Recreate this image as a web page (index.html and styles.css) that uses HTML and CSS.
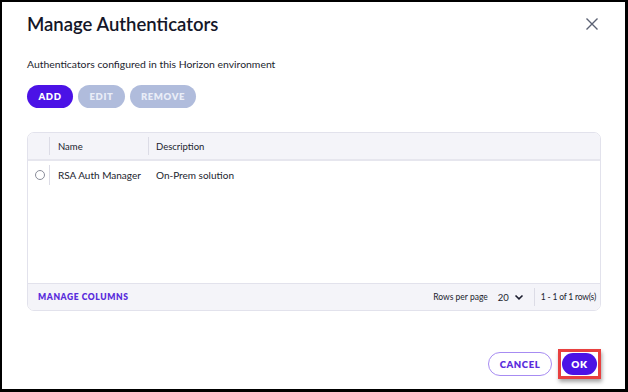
FILE: index.html
```html
<!DOCTYPE html>
<html>
<head>
<meta charset="utf-8">
<link rel="stylesheet" href="styles.css">
</head>
<body>
<div class="dialog">
  <div class="head">
    <h1 class="title">Manage Authenticators</h1>
    <svg class="close" width="14" height="14" viewBox="0 0 14 14"><path d="M1.5 1.5 L12.5 12.5 M12.5 1.5 L1.5 12.5" stroke="#5b6173" stroke-width="1.4" fill="none"/></svg>
  </div>
  <p class="sub">Authenticators configured in this Horizon environment</p>
  <div class="actions">
    <button class="btn primary">ADD</button>
    <button class="btn disabled">EDIT</button>
    <button class="btn disabled">REMOVE</button>
  </div>
  <div class="grid">
    <div class="row header">
      <div class="cell sel"><span class="sep"></span></div>
      <div class="cell name">Name<span class="sep"></span></div>
      <div class="cell desc">Description</div>
    </div>
    <div class="row">
      <div class="cell sel"><span class="radio"></span><span class="sep"></span></div>
      <div class="cell name">RSA Auth Manager</div>
      <div class="cell desc">On-Prem solution</div>
    </div>
    <div class="spacer"></div>
    <div class="footer">
      <span class="manage">MANAGE COLUMNS</span>
      <div class="pager">
        <span class="rpp">Rows per page</span>
        <span class="size">20</span>
        <svg class="chev" width="10" height="8" viewBox="0 0 10 8"><path d="M1.5 2.5 L5 5.8 L8.5 2.5" stroke="#1b1d2e" stroke-width="1.6" fill="none"/></svg>
        <span class="vsep"></span>
        <span class="count">1 - 1 of 1 row(s)</span>
      </div>
    </div>
  </div>
  <div class="bottom">
    <button class="btn cancel">CANCEL</button>
    <div class="highlight"><button class="btn primary ok">OK</button></div>
  </div>
</div>
</body>
</html>
```

FILE: styles.css
```css
html, body {
  margin: 0;
  padding: 0;
  background: #000;
}
body {
  width: 628px;
  height: 392px;
  overflow: hidden;
  font-family: "Lato", "Noto Sans", sans-serif;
  color: #1b1d2e;
}
.dialog {
  margin: 2px 3px 0 2px;
  height: 387px;
  background: #fff;
  box-sizing: border-box;
  padding: 0 24px 0 25px;
  display: flex;
  flex-direction: column;
}
.head {
  display: flex;
  justify-content: space-between;
  align-items: center;
  height: 44px;
}
.title {
  margin: 0;
  font-size: 18.5px;
  font-weight: 600;
  color: #141628;
  padding-top: 0;
}
.close {
  margin-right: 2px;
}
.sub {
  margin: 11px 0 0 0;
  font-size: 10.4px;
  line-height: 14px;
  color: #1b1d2e;
}
.actions {
  display: flex;
  gap: 5px;
  margin-top: 14px;
}
.btn {
  border: none;
  border-radius: 12px;
  height: 23px;
  padding: 0 12px;
  font-family: "Lato", sans-serif;
  font-weight: 800;
  font-size: 9.5px;
  letter-spacing: 0.6px;
  color: #fff;
}
.primary { background: #4b12e6; }
.disabled { background: #b0bcdc; color: #e9edf7; }
.actions .primary { width: 46px; padding: 0; }
.actions .disabled:nth-child(2) { width: 47px; padding: 0; }
.actions .disabled:nth-child(3) { width: 66px; padding: 0; }
.grid {
  margin-top: 24px;
  border: 1px solid #e2e2ec;
  border-radius: 7px;
  height: 179px;
  box-sizing: border-box;
  display: flex;
  flex-direction: column;
  overflow: hidden;
}
.row {
  display: flex;
  height: 28px;
  align-items: center;
  font-size: 10px;
  box-sizing: border-box;
}
.row.header {
  background: #f4f4f9;
  border-bottom: 2px solid #e6e6ee;
  height: 28px;
}
.cell {
  position: relative;
  height: 100%;
  display: flex;
  align-items: center;
  box-sizing: border-box;
}
.sel { width: 22px; justify-content: center; }
.name { width: 99px; padding-left: 8px; }
.desc { padding-left: 7px; }
.sep {
  position: absolute;
  right: 0;
  top: 4px;
  bottom: 4px;
  width: 1px;
  background: #dcdce6;
}
.header .cell { font-size: 9.5px; color: #1b1d2e; }
.radio {
  width: 8px;
  height: 8px;
  border: 1px solid #8a8d9a;
  border-radius: 50%;
  margin-left: 1px;
}
.spacer { flex: 1; }
.footer {
  height: 26px;
  background: #f4f4f9;
  border-top: 1px solid #e2e2ec;
  display: flex;
  align-items: center;
  justify-content: space-between;
  padding: 0 4px 0 10px;
}
.manage {
  font-size: 8.5px;
  font-weight: 800;
  letter-spacing: 0.6px;
  color: #5a2ddc;
}
.pager {
  display: flex;
  align-items: center;
  font-size: 8.5px;
  height: 100%;
}
.rpp { margin-right: 10px; }
.size { font-size: 9.5px; margin-right: 5px; }
.chev { margin-right: 10px; }
.vsep {
  width: 1px;
  height: 18px;
  background: #dcdce6;
  margin-right: 6px;
}
.count { letter-spacing: -0.2px; }
.bottom {
  display: flex;
  justify-content: flex-end;
  align-items: center;
  gap: 6px;
  margin-top: 38px;
}
.cancel {
  background: #fff;
  border: 1.5px solid #a78cf2;
  color: #5a2ddc;
  height: 24px;
  width: 64px;
  padding: 0;
}
.highlight {
  border: 3px solid #e8403f;
  padding: 1px;
  box-shadow: 1px 3px 4px rgba(0,0,0,0.35);
  display: flex;
}
.ok {
  width: 35px;
  height: 22px;
  padding: 0;
  font-size: 10px;
}
```
